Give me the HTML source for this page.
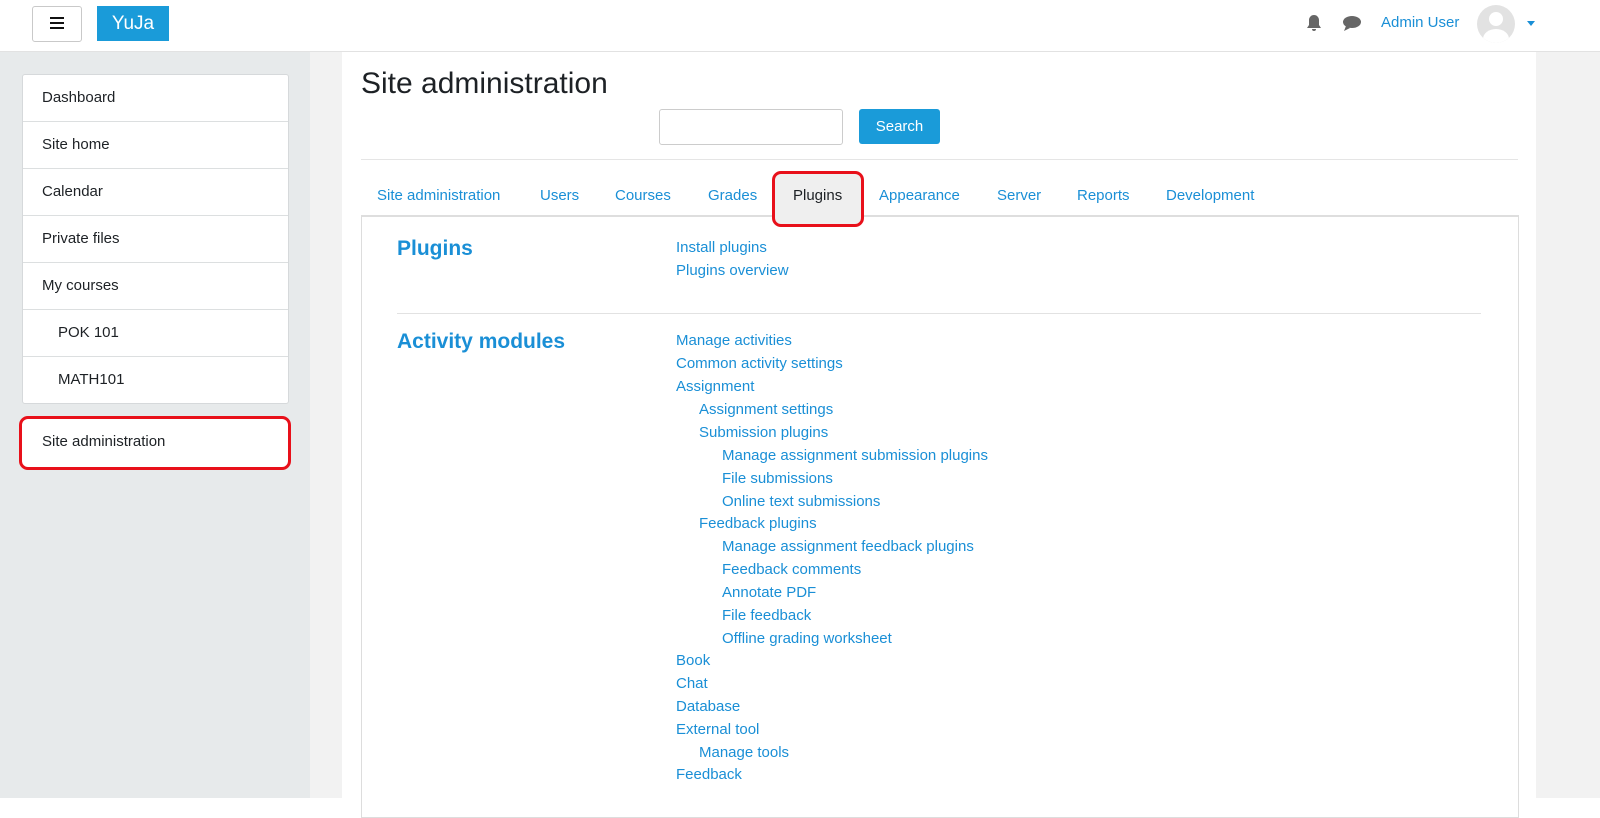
<!DOCTYPE html><html><head><style>
body{margin:0;width:1600px;height:798px;overflow:hidden;font-family:"Liberation Sans",sans-serif;background:#fff;position:relative}
.a{position:absolute}
a,.l{color:#1a8fd6;text-decoration:none}
.side{left:0;top:52px;width:310px;height:746px;background:#e7eaeb}
.strip{left:310px;top:52px;width:32px;height:746px;background:#f2f2f2}
.strip2{left:1536px;top:52px;width:64px;height:746px;background:#f2f2f2}
.menu{left:22px;top:74px;width:265px;border:1px solid #d6d9db;border-radius:3px;background:#fff}
.menu div{height:46px;line-height:46px;border-bottom:1px solid #dcdfe0;padding-left:19px;font-size:15px;color:#1d2125}
.menu div:last-child{border-bottom:none}
.links div{position:absolute;font-size:15px;color:#1a8fd6;white-space:nowrap}
.tab{position:absolute;top:187px;font-size:15px;color:#1a8fd6}
</style></head><body>
<div class="a" style="left:0;top:0;width:1600px;height:51px;border-bottom:1px solid #e2e2e2;background:#fff"></div>
<div class="a" style="left:32px;top:6px;width:48px;height:34px;border:1px solid #c9c9c9;border-radius:3px"></div>
<div class="a" style="left:50px;top:17px;width:14px;height:2px;background:#111;box-shadow:0 5px 0 #111,0 10px 0 #111"></div>
<div class="a" style="left:97px;top:6px;width:72px;height:35px;background:#1a9bd9;color:#fff;font-size:19px;line-height:35px;text-align:center">YuJa</div>
<svg class="a" style="left:1306px;top:14px" width="16" height="18" viewBox="0 0 16 18"><path d="M8 1c-3 0-5 2.5-5 5v5l-2 3h14l-2-3V6c0-2.5-2-5-5-5z M6 15a2 2 0 0 0 4 0z" fill="#666"/></svg>
<svg class="a" style="left:1342px;top:15px" width="20" height="17" viewBox="0 0 20 17"><ellipse cx="10" cy="7" rx="9" ry="6" fill="#666"/><path d="M4 11l-2 5 6-3z" fill="#666"/></svg>
<div class="a l" style="left:1381px;top:14px;font-size:15px">Admin User</div>
<div class="a" style="left:1477px;top:5px;width:38px;height:38px;border-radius:50%;background:#e2e2e2;overflow:hidden"><div style="position:absolute;left:12px;top:7px;width:14px;height:14px;border-radius:50%;background:#fff"></div><div style="position:absolute;left:6px;top:24px;width:26px;height:20px;border-radius:50%;background:#fff"></div></div>
<div class="a" style="left:1527px;top:21px;border:4px solid transparent;border-top:5px solid #1a8fd6"></div>
<div class="a side"></div><div class="a strip"></div><div class="a strip2"></div>
<div class="a menu"><div>Dashboard</div><div>Site home</div><div>Calendar</div><div>Private files</div><div>My courses</div><div style="padding-left:35px">POK 101</div><div style="padding-left:35px">MATH101</div></div>
<div class="a" style="left:19px;top:416px;width:266px;height:48px;border:3px solid #e8101a;border-radius:9px;background:#fff"></div>
<div class="a" style="left:42px;top:433px;font-size:15px;color:#1d2125">Site administration</div>
<div class="a" style="left:361px;top:67px;font-size:30px;color:#1d2125">Site administration</div>
<div class="a" style="left:659px;top:109px;width:182px;height:34px;border:1px solid #ccc;border-radius:3px"></div>
<div class="a" style="left:859px;top:109px;width:81px;height:35px;background:#1a9bd9;border-radius:3px;color:#fff;font-size:15px;line-height:35px;text-align:center">Search</div>
<div class="a" style="left:361px;top:159px;width:1157px;height:1px;background:#e5e5e5"></div>
<div class="a" style="left:361px;top:215px;width:1156px;height:600px;border:1px solid #ddd;border-top:2px solid #dedede"></div>
<div class="tab" style="left:377px">Site administration</div>
<div class="tab" style="left:540px">Users</div>
<div class="tab" style="left:615px">Courses</div>
<div class="tab" style="left:708px">Grades</div>
<div class="a" style="left:772px;top:171px;width:86px;height:50px;border:3px solid #e8101a;border-radius:9px;background:#efefef"></div>
<div class="tab" style="left:793px;color:#1d2125">Plugins</div>
<div class="tab" style="left:879px">Appearance</div>
<div class="tab" style="left:997px">Server</div>
<div class="tab" style="left:1077px">Reports</div>
<div class="tab" style="left:1166px">Development</div>
<div class="a l" style="left:397px;top:237px;font-size:21px;font-weight:bold">Plugins</div>
<div class="a l" style="left:397px;top:330px;font-size:21px;font-weight:bold">Activity modules</div>
<div class="a" style="left:397px;top:313px;width:1084px;height:1px;background:#e2e2e2"></div>
<div class="links">
<div style="left:676px;top:239px">Install plugins</div>
<div style="left:676px;top:262px">Plugins overview</div>
<div style="left:676px;top:332px">Manage activities</div>
<div style="left:676px;top:355px">Common activity settings</div>
<div style="left:676px;top:378px">Assignment</div>
<div style="left:699px;top:401px">Assignment settings</div>
<div style="left:699px;top:424px">Submission plugins</div>
<div style="left:722px;top:447px">Manage assignment submission plugins</div>
<div style="left:722px;top:470px">File submissions</div>
<div style="left:722px;top:493px">Online text submissions</div>
<div style="left:699px;top:515px">Feedback plugins</div>
<div style="left:722px;top:538px">Manage assignment feedback plugins</div>
<div style="left:722px;top:561px">Feedback comments</div>
<div style="left:722px;top:584px">Annotate PDF</div>
<div style="left:722px;top:607px">File feedback</div>
<div style="left:722px;top:630px">Offline grading worksheet</div>
<div style="left:676px;top:652px">Book</div>
<div style="left:676px;top:675px">Chat</div>
<div style="left:676px;top:698px">Database</div>
<div style="left:676px;top:721px">External tool</div>
<div style="left:699px;top:744px">Manage tools</div>
<div style="left:676px;top:766px">Feedback</div>
</div>
</body></html>
